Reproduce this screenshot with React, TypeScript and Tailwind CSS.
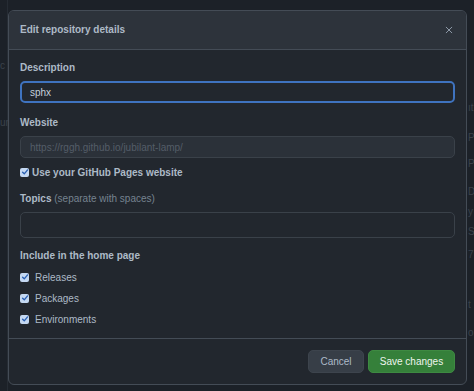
import type { ReactNode } from "react";

const FONT = "[font-family:'Liberation_Sans',Arial,sans-serif]";

function CheckBox() {
  return (
    <span className="flex h-[9px] w-[9px] shrink-0 items-center justify-center rounded-[2px] bg-[#c4d8f2]">
      <svg viewBox="0 0 10 10" className="h-[8px] w-[8px]">
        <path d="M2 5.2 L4.1 7.3 L8.2 2.4" fill="none" stroke="#2a60b3" strokeWidth="1.7" strokeLinecap="round" strokeLinejoin="round" />
      </svg>
    </span>
  );
}

function CheckRow({ label, bold = false }: { label: string; bold?: boolean }) {
  return (
    <label className={bold ? "flex h-[14px] items-center gap-[3px]" : "flex h-[14px] items-center gap-[6px]"}>
      <CheckBox />
      <span className={bold ? "font-bold text-[#adbac7]" : "text-[#adbac7]"}>{label}</span>
    </label>
  );
}

function FieldLabel({ children }: { children: ReactNode }) {
  return <div className="h-[14px] leading-[14px] font-bold text-[#adbac7]">{children}</div>;
}

// faint glyphs of the page behind the overlay
const RIGHT_GHOSTS = [
  { y: 101, t: "ıt" },
  { y: 131, t: "P" },
  { y: 157, t: "P" },
  { y: 185, t: "D" },
  { y: 205, t: "y" },
  { y: 225, t: "S" },
  { y: 248, t: "7" },
  { y: 298, t: "t" },
  { y: 326, t: "o" },
];

export default function App() {
  return (
    <div className={`relative h-[391px] w-[474px] overflow-hidden bg-[#1c2128] text-[10px] ${FONT}`}>
      {/* dimmed page behind the dialog */}
      <div className="flex h-full justify-between">
        <div className="flex w-[8px] flex-col border-r border-[#262c34] pt-[59px] text-[#3b424b]">
          <span className="h-[14px] leading-[14px]">c</span>
          <span className="mt-[43px] h-[14px] leading-[14px]">ur</span>
        </div>
        <div className="relative w-[7px] text-[#3b424b]">
          {RIGHT_GHOSTS.map((g) => (
            <span key={g.y} className="absolute left-[1px] leading-[14px]" style={{ top: g.y }}>
              {g.t}
            </span>
          ))}
        </div>
      </div>

      {/* dialog */}
      <div className="absolute left-[8px] top-[10px] flex h-[375px] w-[459px] flex-col overflow-hidden rounded-[6px] border border-[#444c56] bg-[#22272e]">
        <div className="flex h-[39px] shrink-0 items-center justify-between border-b border-[#444c56] bg-[#2d333b] pb-[1px] pl-[11px] pr-[13px]">
          <span className="text-[10px] font-bold text-[#adbac7]">Edit repository details</span>
          <svg viewBox="0 0 10 10" className="h-[8px] w-[8px]">
            <path d="M1.5 1.5 L8.5 8.5 M8.5 1.5 L1.5 8.5" stroke="#909dab" strokeWidth="1.2" strokeLinecap="round" />
          </svg>
        </div>

        <div className="flex flex-1 flex-col px-[11px] pt-[11px]">
          <FieldLabel>Description</FieldLabel>
          <div className="mt-[6px] flex h-[22px] items-center rounded-[5px] border-2 border-[#3f73bf] bg-[#22272e] pl-[8px] text-[#c5d1dc]">
            sphx
          </div>

          <div className="mt-[13px]">
            <FieldLabel>Website</FieldLabel>
          </div>
          <div className="mt-[6px] flex h-[22px] items-center rounded-[5px] border border-[#3a4149] bg-[#2b3139] pl-[9px] text-[#545d68]">
            https://rggh.github.io/jubilant-lamp/
          </div>

          <div className="mt-[7px]">
            <CheckRow label="Use your GitHub Pages website" bold />
          </div>

          <div className="mt-[13px] h-[14px] leading-[14px]">
            <span className="font-bold text-[#adbac7]">Topics</span>
            <span className="text-[#768390]"> (separate with spaces)</span>
          </div>
          <div className="mt-[6px] h-[26px] rounded-[5px] border border-[#3a4149] bg-[#22272e]" />

          <div className="mt-[11px]">
            <FieldLabel>Include in the home page</FieldLabel>
          </div>
          <div className="mt-[7px] flex flex-col gap-[7px]">
            <CheckRow label="Releases" />
            <CheckRow label="Packages" />
            <CheckRow label="Environments" />
          </div>
        </div>

        <div className="flex h-[46px] shrink-0 items-center justify-end gap-[4px] border-t border-[#444c56] pr-[11px]">
          <button
            type="button"
            className="h-[23px] w-[56px] rounded-[5px] border border-[#3d444d] bg-[#373e47] text-[10px] text-[#adbac7]"
          >
            Cancel
          </button>
          <button
            type="button"
            className="h-[23px] w-[87px] rounded-[5px] border border-[#3e8a42] bg-[#35803a] text-[10px] text-[#eef5ee]"
          >
            Save changes
          </button>
        </div>
      </div>
    </div>
  );
}
